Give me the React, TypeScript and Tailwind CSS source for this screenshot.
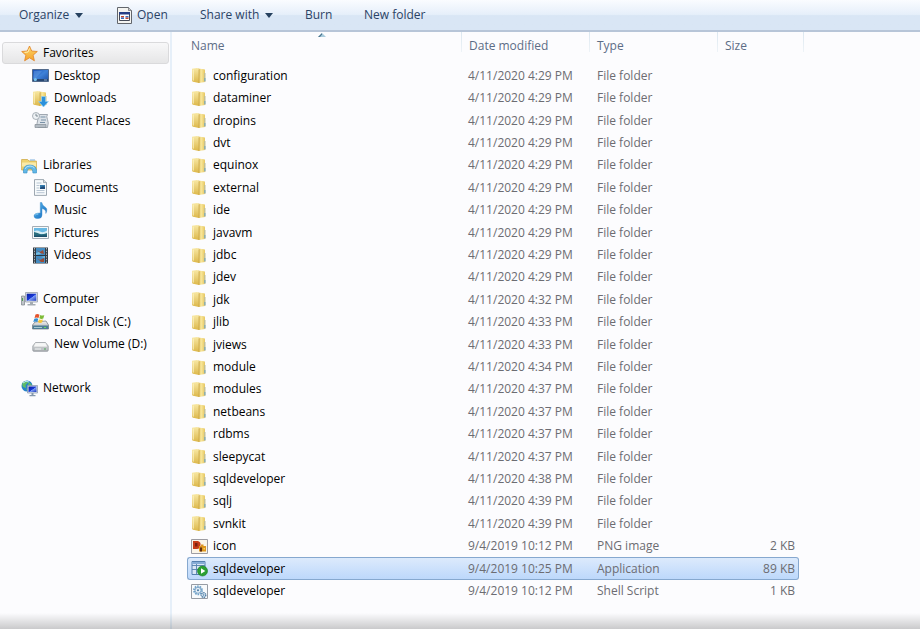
import type { ReactNode } from "react";

function Icon({ children }: { children: ReactNode }) {
  return (
    <svg viewBox="0 0 17 17" className="h-[17px] w-[17px] shrink-0" aria-hidden="true">
      {children}
    </svg>
  );
}

function Gradients() {
  return (
    <svg className="absolute h-0 w-0" aria-hidden="true">
      <defs>
        <linearGradient id="gold" x1="0" x2="1" y1="0" y2="0">
          <stop offset="0" stopColor="#d9b653" />
          <stop offset="0.45" stopColor="#f8e79c" />
          <stop offset="1" stopColor="#e6c65f" />
        </linearGradient>
        <linearGradient id="goldFront" x1="0" x2="0" y1="0" y2="1">
          <stop offset="0" stopColor="#f8e8a4" />
          <stop offset="1" stopColor="#dcb749" />
        </linearGradient>
        <linearGradient id="screen" x1="0" x2="1" y1="0" y2="1">
          <stop offset="0" stopColor="#1a4fb4" />
          <stop offset="0.5" stopColor="#3f82d8" />
          <stop offset="1" stopColor="#1c4da4" />
        </linearGradient>
        <linearGradient id="monitor" x1="0" x2="1" y1="0" y2="1">
          <stop offset="0" stopColor="#0a1e9c" />
          <stop offset="0.5" stopColor="#1838d8" />
          <stop offset="0.55" stopColor="#7c9cf4" />
          <stop offset="1" stopColor="#1b36c0" />
        </linearGradient>
        <linearGradient id="metal" x1="0" x2="0" y1="0" y2="1">
          <stop offset="0" stopColor="#f5f5f5" />
          <stop offset="1" stopColor="#9ea2a6" />
        </linearGradient>
        <linearGradient id="star" x1="0" x2="0" y1="0" y2="1">
          <stop offset="0" stopColor="#fcd66a" />
          <stop offset="1" stopColor="#f5a22a" />
        </linearGradient>
        <linearGradient id="blueNote" x1="0" x2="1" y1="0" y2="1">
          <stop offset="0" stopColor="#5cb9ee" />
          <stop offset="1" stopColor="#1268bd" />
        </linearGradient>
      </defs>
    </svg>
  );
}

const FolderShape = () => (
  <>
    <path d="M7 1.5 13 2.2q1 .2 1 1V15l-6 1z" fill="url(#gold)" />
    <path d="M13 6h1.500v9H13z" fill="#c4bf92" />
    <path d="M13.400 11h1v3h-1z" fill="#6ea3b8" />
    <path d="M1 1.800 6 1q2 0 2 1.600V16L2 14.800q-1-.2-1-1.200z" fill="url(#goldFront)" />
    <path d="M2.200 2.600v11" stroke="#fcf3c6" />
    <path d="M8 2.500V16" stroke="#c5a243" strokeWidth=".7" />
  </>
);

const FolderIcon = () => <Icon><FolderShape /></Icon>;

const StarIcon = () => (
  <Icon>
    <path d="m8.500 1 2.200 5 5.600.5-4.200 3.700 1.300 5.600-4.900-3-4.900 3 1.300-5.600L.7 6.500 6.300 6z" fill="url(#star)" stroke="#e28324" strokeWidth=".8" strokeLinejoin="round" />
    <path d="m8.500 3.500-1.500 3.500-3.500.5" stroke="#fff0b4" fill="none" />
  </Icon>
);

const DesktopIcon = () => (
  <Icon>
    <path d="M.5 2.500h16v12H.5z" fill="url(#screen)" stroke="#526a8c" />
    <path d="M1 12h15v2H1z" fill="#284671" />
    <path d="M2 4h8L4 11H2z" fill="#6fa7e8" opacity=".4" />
    <circle cx="3.300" cy="12.500" r="1.600" fill="#76c4ef" />
    <path d="M12 13h3" stroke="#8aa7c8" />
  </Icon>
);

const DownloadsIcon = () => (
  <Icon>
    <FolderShape />
    <path d="M9.500 6.500h4v5h3L11.500 17l-5-5.500h3z" fill="#2b91dc" stroke="#9dd3f4" strokeWidth=".6" />
  </Icon>
);

const RecentIcon = () => (
  <Icon>
    <path d="M6 2.500h9.500q-1.500 2 0 5t0 8H6q-2-1-1-4t1-9z" fill="#dce2e8" stroke="#8d969f" strokeWidth=".8" />
    <path d="M8.500 5h5M9 8h5M8 10.500h5" stroke="#7991a7" />
    <path d="M3 12.500h11v3H3z" fill="#b4bcc4" stroke="#858e96" strokeWidth=".7" />
    <circle cx="4" cy="4" r="3.500" fill="#eef2f5" stroke="#98a1a9" strokeWidth=".8" />
    <path d="M4 1.800V4h2" stroke="#66747f" strokeWidth=".8" fill="none" />
  </Icon>
);

const LibrariesIcon = () => (
  <Icon>
    <path d="M.6 2.500h6L8 4h7.400v9H.6z" fill="#efd36f" stroke="#d0ac4b" strokeWidth=".8" />
    <path d="M1 5.500h14v4H1z" fill="#faeaa9" />
    <path d="M9 3h5" stroke="#7caedc" />
    <path d="M2.500 16q-1-8 6-8 8 0 7 8h-3.600q0-4.500-3-4.500T6 16z" fill="#62b8e6" stroke="#388fc8" strokeWidth=".6" />
    <path d="M4 12q1-3 5-3 3 0 4.500 2" stroke="#b6e5fb" fill="none" />
  </Icon>
);

const DocumentsIcon = () => (
  <Icon>
    <path d="M2.500.600h9l3 3v12.800h-12z" fill="#f7fafc" stroke="#87939e" strokeWidth=".8" />
    <path d="M11.500.600v3h3" fill="#d6dee5" stroke="#87939e" strokeWidth=".7" />
    <path d="M4.500 4h5M4.500 6.500h3M4.500 9h3M4.500 11.500h8M4.500 13.700h8" stroke="#a7b8c8" strokeWidth=".8" />
    <path d="M8 6h5v4H8z" fill="#357cae" />
    <path d="M8 9q3-3 5-1v2H8z" fill="#224d7b" />
  </Icon>
);

const MusicIcon = () => (
  <Icon>
    <path d="M8.300.500h1.500q.4 3.200 3.200 4.400 3.200 1.800.8 6.600.7-4-3.800-5v6.500q0 3.600-4 3.600-4 0-4-2.600 0-3 6.300-3z" fill="url(#blueNote)" stroke="#3184c4" strokeWidth=".4" />
    <path d="M3.300 13q1-1.300 3-1" stroke="#91d7f8" fill="none" />
  </Icon>
);

const PicturesIcon = () => (
  <Icon>
    <path d="M.5 2.500h16v12H.5z" fill="#f7f9fa" stroke="#a4adb5" />
    <path d="M2 4h13v9H2z" fill="#69b9e4" />
    <path d="M2 7.500q3-2 6 0t7-1V10H2z" fill="#d6edf4" />
    <path d="M2 8q4 1 6 2t7-1v4H2z" fill="#286d7e" />
    <path d="M2 11.500h13V13H2z" fill="#1c506c" />
  </Icon>
);

const VideosIcon = () => (
  <Icon>
    <path d="M1 .500h15v16H1z" fill="#333b43" />
    <path d="M4 1h9v15H4z" fill="#438bc1" />
    <path d="M2.500 1v15M14.500 1v15" stroke="#a9b3bc" strokeWidth="1" strokeDasharray="1.500 1.200" />
    <path d="M4 8.500h9" stroke="#263848" />
    <path d="m5 3 3 2 3-2 1 4-4-1zM5 11l3 2 4-2v4H9l-2-2z" fill="#9d4c35" />
    <path d="m4 6 3-1 2 2-5 1zM9 10l4-1v2z" fill="#75bde1" />
  </Icon>
);

const ComputerIcon = () => (
  <Icon>
    <path d="M.5 5h3v9h-3z" fill="#bfc4c8" stroke="#7b838b" strokeWidth=".7" />
    <path d="M1.500 7v3" stroke="#4b9f52" />
    <path d="M4.500 1.500h12v9.500h-12z" fill="#e2e5e9" stroke="#98a0ab" strokeWidth=".8" />
    <path d="M5.700 2.700h9.600v7.100H5.700z" fill="url(#monitor)" />
    <path d="M9 11h3v2h2.500v1.500H6.500V13H9z" fill="#a4abb2" />
  </Icon>
);

const LocalDiskIcon = () => (
  <Icon>
    <path d="m3 9 11-1 2.500 4v4H.5v-4z" fill="url(#metal)" stroke="#6c747c" strokeWidth=".7" />
    <path d="M.8 12.500h15.500V16H.8z" fill="#4e7d96" />
    <path d="M2 14.500h8" stroke="#a5c7d2" />
    <path d="M12 14.500h2" stroke="#69dd56" />
    <path d="M3.500 1.500q2-1 4 .2L6.500 5q-2-1-4 0z" fill="#e4542d" />
    <path d="M8.300 2q2 1 4 0l-1 3.500q-2 1-4-.2z" fill="#7dbb38" />
    <path d="M2.300 5.800q2-1 4 0L5.300 9q-2-1-4 0z" fill="#338fd3" />
    <path d="M7 6.200q2 1 4 0l-1 3.300q-2 1-4-.2z" fill="#f6c537" />
  </Icon>
);

const DriveIcon = () => (
  <Icon>
    <path d="M3.500 6.500h10l2.700 3.500v4.300q0 1-1 1H1.800q-1 0-1-1V10z" fill="url(#metal)" stroke="#8b9196" strokeWidth=".7" />
    <path d="M3.800 7.200h9.400l2 3.200H1.800z" fill="#f5f6f6" />
    <path d="M1.500 11h14v3.300h-14z" fill="#bfc3c6" />
    <path d="M3 13h6" stroke="#eff1f2" />
    <path d="M12 13h2" stroke="#4ba957" />
  </Icon>
);

const NetworkIcon = () => (
  <Icon>
    <circle cx="6" cy="6" r="5.500" fill="#2683c9" />
    <path d="M3 1.500q4-1 4 1L4.500 5 5 8 2 7Q0 3 3 1.500zM8 2l3 3-2 2-2-2zM5 9l3-1-1 3z" fill="#5fbc67" />
    <path d="M2 3q3-3 6-1" stroke="#bde9f5" fill="none" />
    <path d="M6.500 5.500h10V13h-10z" fill="#dce3eb" stroke="#8394aa" strokeWidth=".7" />
    <path d="M7.500 6.500h8V12h-8z" fill="url(#monitor)" />
    <path d="M10.500 13h2v2h2v1.200h-6V15h2z" fill="#8498ad" />
  </Icon>
);

const AppWindowIcon = () => (
  <Icon>
    <path d="M1.500.500h11l3 3v13h-14z" fill="#f4f4f1" stroke="#62666c" />
    <path d="M12.500.500v3h3" fill="#c9c9c9" stroke="#62666c" strokeWidth=".7" />
    <path d="M3.500 5.500h10v8h-10z" fill="#fff" stroke="#444a57" />
    <path d="M3 5h11v2.500H3z" fill="#263f86" />
    <path d="M5 9h3v1.500H5z" fill="#c44934" />
    <path d="M5 10.500h3V12H5z" fill="#3970c1" />
    <path d="M9.500 9h3v1.500h-3z" fill="#3970c1" />
    <path d="M9.500 10.500h3V12h-3z" fill="#c44934" />
  </Icon>
);

const ImageFileIcon = () => (
  <Icon>
    <path d="M.5 1.500h16v14H.5z" fill="#faf5e8" stroke="#9d9da3" />
    <path d="M2 3h5q3 1 2.500 4-.5 4-3.500 4H2z" fill="#c63c18" />
    <path d="M4 5h2.500v3.500H4z" fill="#7a200e" />
    <path d="M8 8h2V6.500h2.500V8H15v5.500H8z" fill="#dc951d" />
    <path d="M9 9.500h2v4H9z" fill="#5e2d11" />
    <path d="M12.500 10H14v1.500h-1.500z" fill="#fbd458" />
  </Icon>
);

const RunnableIcon = () => (
  <Icon>
    <path d="M1 1.500h13v13H1z" fill="#d8e6f6" stroke="#5580ae" />
    <path d="M1 2h13v2H1z" fill="#86acd6" />
    <path d="M1 5.500h13M1 9.500h13M5.500 4v10" stroke="#5580ae" strokeWidth=".9" />
    <circle cx="11.500" cy="11" r="5" fill="#2ba032" stroke="#16781e" strokeWidth=".6" />
    <path d="m10 8.300 4.300 2.700-4.300 2.700z" fill="#fff" />
  </Icon>
);

const ScriptIcon = () => (
  <Icon>
    <path d="M.5 1.500h16v14H.5z" fill="#f8fafc" stroke="#979ca4" />
    <circle cx="7" cy="7.300" r="4" fill="none" stroke="#6fa1c8" strokeWidth="1.800" strokeDasharray="1.600 .9" />
    <circle cx="7" cy="7.300" r="3" fill="#e3eef7" stroke="#6a96bd" strokeWidth=".8" />
    <circle cx="7" cy="7.300" r="1" fill="#4777a0" />
    <circle cx="12.500" cy="12" r="2.300" fill="#dbe9f3" stroke="#517ea6" strokeWidth="1.400" strokeDasharray="1.300 .6" />
    <circle cx="12.500" cy="12" r=".8" fill="#517ea6" />
  </Icon>
);

const CaretDown = () => (
  <svg viewBox="0 0 8 5" className="h-[5px] w-2" aria-hidden="true">
    <path d="M0 0h8L4 5z" fill="#26415f" />
  </svg>
);

type Place = { label: string; icon: () => ReactNode };

const places: Place[][] = [
  [
    { label: "Favorites", icon: StarIcon },
    { label: "Desktop", icon: DesktopIcon },
    { label: "Downloads", icon: DownloadsIcon },
    { label: "Recent Places", icon: RecentIcon },
  ],
  [
    { label: "Libraries", icon: LibrariesIcon },
    { label: "Documents", icon: DocumentsIcon },
    { label: "Music", icon: MusicIcon },
    { label: "Pictures", icon: PicturesIcon },
    { label: "Videos", icon: VideosIcon },
  ],
  [
    { label: "Computer", icon: ComputerIcon },
    { label: "Local Disk (C:)", icon: LocalDiskIcon },
    { label: "New Volume (D:)", icon: DriveIcon },
  ],
  [{ label: "Network", icon: NetworkIcon }],
];

type Entry = { name: string; date: string; type: string; size?: string; icon: () => ReactNode; selected?: boolean };

const folder = (name: string, time: string): Entry => ({
  name,
  date: `4/11/2020 ${time} PM`,
  type: "File folder",
  icon: FolderIcon,
});

const entries: Entry[] = [
  folder("configuration", "4:29"),
  folder("dataminer", "4:29"),
  folder("dropins", "4:29"),
  folder("dvt", "4:29"),
  folder("equinox", "4:29"),
  folder("external", "4:29"),
  folder("ide", "4:29"),
  folder("javavm", "4:29"),
  folder("jdbc", "4:29"),
  folder("jdev", "4:29"),
  folder("jdk", "4:32"),
  folder("jlib", "4:33"),
  folder("jviews", "4:33"),
  folder("module", "4:34"),
  folder("modules", "4:37"),
  folder("netbeans", "4:37"),
  folder("rdbms", "4:37"),
  folder("sleepycat", "4:37"),
  folder("sqldeveloper", "4:38"),
  folder("sqlj", "4:39"),
  folder("svnkit", "4:39"),
  { name: "icon", date: "9/4/2019 10:12 PM", type: "PNG image", size: "2 KB", icon: ImageFileIcon },
  { name: "sqldeveloper", date: "9/4/2019 10:25 PM", type: "Application", size: "89 KB", icon: RunnableIcon, selected: true },
  { name: "sqldeveloper", date: "9/4/2019 10:12 PM", type: "Shell Script", size: "1 KB", icon: ScriptIcon },
];

function Toolbar() {
  return (
    <header className="flex h-8 items-center border-b-2 border-[#b7c5d8] bg-linear-to-b from-[#fafcff] from-0% via-[#e6effa] via-48% to-[#d9e6f5] to-52% pl-[19px] text-[#2b4365]">
      <button type="button" className="flex w-[97px] items-center gap-[6px]">
        Organize <CaretDown />
      </button>
      <button type="button" className="flex w-[84px] items-center gap-1">
        <AppWindowIcon /> Open
      </button>
      <button type="button" className="flex w-[105px] items-center gap-[6px]">
        Share with <CaretDown />
      </button>
      <button type="button" className="w-[59px] text-left">Burn</button>
      <button type="button">New folder</button>
    </header>
  );
}

function Sidebar() {
  return (
    <nav className="w-[172px] shrink-0 border-r-2 border-[#e6eff9] pt-[10px] pr-px pl-[2px]" aria-label="Places">
      {places.map((group, g) => (
        <ul key={g} className="mb-[22px]">
          {group.map((place, i) => (
            <li key={place.label} className="h-[22px] even:h-[23px]">
              <button
                type="button"
                className={`flex h-full w-full items-center gap-[5px] rounded-[3px] border text-left text-black ${
                  i === 0 ? "pl-[18px]" : "pl-[29px]"
                } ${g === 0 && i === 0 ? "border-[#dadadc] bg-linear-to-b from-[#f8f8f9] to-[#e6e6e7]" : "border-transparent"}`}
              >
                <place.icon />
                {place.label}
              </button>
            </li>
          ))}
        </ul>
      ))}
    </nav>
  );
}

const headCell =
  "relative pb-1 pl-2 text-left align-middle font-normal before:absolute before:top-0 before:left-0 before:h-5 before:w-px before:bg-linear-to-b before:from-[#dbe7f0] before:to-[#eef3f7]";

const selectedCell = "border-y border-[#86a8cf] bg-linear-to-b from-[#dceafc] to-[#bdd8fb]";

function FileTable() {
  return (
    <table className="w-[612px] table-fixed border-separate border-spacing-0">
      <colgroup>
        <col />
        <col className="w-32" />
        <col className="w-32" />
        <col className="w-[82px]" />
      </colgroup>
      <thead className="text-[#5c6d86]">
        <tr className="h-8">
          <th className="relative pb-1 pl-1 text-left align-middle font-normal" aria-sort="ascending">
            <svg viewBox="0 0 8 4" className="absolute top-px left-[131px] h-1 w-2" aria-hidden="true">
              <path d="M0 4 4 0l4 4z" fill="#a9cbdc" />
              <path d="M0 4 4 0v1.500L2 4z" fill="#4c7690" />
            </svg>
            <button type="button">Name</button>
          </th>
          <th className={headCell}><button type="button">Date modified</button></th>
          <th className={headCell}><button type="button">Type</button></th>
          <th className={`${headCell} after:absolute after:top-0 after:-right-[5px] after:h-5 after:w-px after:bg-linear-to-b after:from-[#dbe7f0] after:to-[#eef3f7]`}>
            <button type="button">Size</button>
          </th>
        </tr>
      </thead>
      <tbody className="text-[#6c6c72]">
        {entries.map((entry) => {
          const mark = entry.selected ? selectedCell : "";
          return (
            <tr
              key={`${entry.name}-${entry.type}`}
              aria-selected={entry.selected}
              className="h-[22px] [&:nth-child(5n+1)]:h-[23px] [&:nth-child(5n+3)]:h-[23px]"
            >
              <td className={`p-0 text-black ${entry.selected ? "rounded-l-[3px] border-l pl-[3px]" : "pl-1"} ${mark}`}>
                <span className="flex items-center gap-[5px]">
                  <entry.icon />
                  {entry.name}
                </span>
              </td>
              <td className={`p-0 pl-[7px] ${mark}`}>{entry.date}</td>
              <td className={`p-0 pl-2 ${mark}`}>{entry.type}</td>
              <td className={`p-0 text-right ${entry.selected ? "rounded-r-[3px] border-r pr-[3px]" : "pr-1"} ${mark}`}>
                {entry.size}
              </td>
            </tr>
          );
        })}
      </tbody>
    </table>
  );
}

export default function App() {
  return (
    <div className="relative flex min-h-screen flex-col bg-[#fcfcfe] font-['Open_Sans','Noto_Sans',sans-serif] text-[12px] leading-[18px]">
      <Gradients />
      <Toolbar />
      <div className="flex flex-1">
        <Sidebar />
        <main className="min-w-0 flex-1 pl-[15px]">
          <FileTable />
        </main>
      </div>
      <div className="pointer-events-none absolute inset-x-0 bottom-0 h-4 bg-linear-to-b from-transparent to-black/20" />
    </div>
  );
}
